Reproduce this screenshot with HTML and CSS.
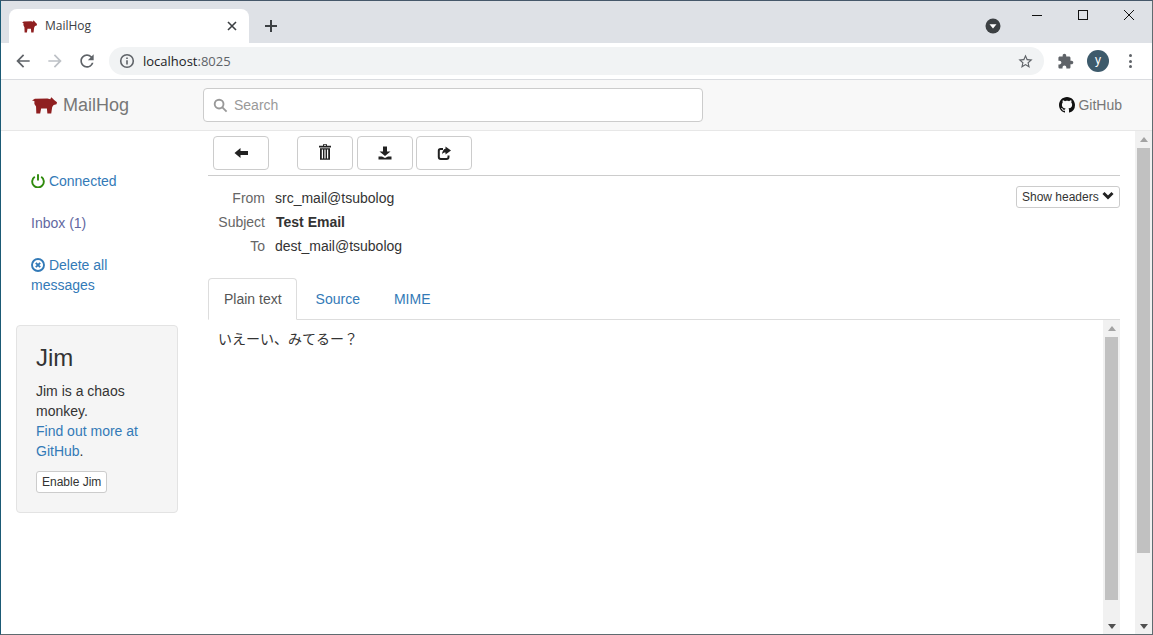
FILE: index.html
```html
<!DOCTYPE html>
<html lang="en">
<head>
    <meta charset="UTF-8">
    <title>MailHog</title>
    <link rel="stylesheet" href="styles.css">
</head>
<body>
    <svg class="defs" width="0" height="0">
        <symbol id="pig" viewBox="0 0 26 17" preserveAspectRatio="none">
            <path d="M0 3.5 L3 1.8 L16 1.5 L19 2.2 L20 0.3 L21.5 1.5 L23 3 L26 5.3 L25.5 7.2 L22.5 8 L21 10 L20 16.5 L16 16.5 L15.5 11.5 L9.5 11.5 L8.5 16.5 L4.5 16.5 L4.2 9.5 L2.5 7 L2.5 4 Z"/>
        </symbol>
    </svg>

    <!-- browser chrome -->
    <div class="tabstrip">
        <div class="tab">
            <svg class="tab-icon"><use href="#pig"/></svg>
            <span class="tab-title">MailHog</span>
            <svg class="tab-close" viewBox="0 0 10 10"><path d="M1 1 L9 9 M9 1 L1 9"/></svg>
        </div>
        <svg class="new-tab" viewBox="0 0 12 12"><path d="M6 0 V12 M0 6 H12"/></svg>
        <svg class="profile-drop" viewBox="0 0 16 16"><circle cx="8" cy="8" r="7.5" fill="#3c4043"/><path d="M4.5 6.2 H11.5 L8 10.5 Z" fill="#fff"/></svg>
        <div class="window-buttons">
            <svg viewBox="0 0 12 12"><path d="M1 6.5 H11"/></svg>
            <svg viewBox="0 0 12 12"><rect x="1.5" y="1.5" width="9" height="9"/></svg>
            <svg viewBox="0 0 12 12"><path d="M1 1 L11 11 M11 1 L1 11"/></svg>
        </div>
    </div>
    <div class="toolbar">
        <svg class="tool-icon" viewBox="0 0 24 24"><path d="M20 11H7.83l5.59-5.59L12 4l-8 8 8 8 1.41-1.41L7.83 13H20v-2z"/></svg>
        <svg class="tool-icon disabled" viewBox="0 0 24 24"><path d="M4 11h12.17l-5.59-5.59L12 4l8 8-8 8-1.41-1.41L16.17 13H4v-2z"/></svg>
        <svg class="tool-icon" viewBox="0 0 24 24"><path d="M17.65 6.35A7.958 7.958 0 0 0 12 4c-4.42 0-7.99 3.58-7.99 8s3.57 8 7.99 8c3.73 0 6.84-2.55 7.73-6h-2.08A5.99 5.99 0 0 1 12 18c-3.31 0-6-2.69-6-6s2.69-6 6-6c1.66 0 3.14.69 4.22 1.78L13 11h7V4l-2.35 2.35z"/></svg>
        <div class="omnibox">
            <svg class="info-icon" viewBox="0 0 16 16"><circle cx="8" cy="8" r="6.3"/><path d="M8 7.2 V11.5 M8 4.5 V6"/></svg>
            <span class="url">localhost<span class="port">:8025</span></span>
            <svg class="star-icon" viewBox="0 0 24 24"><path d="M22 9.24l-7.19-.62L12 2 9.19 8.63 2 9.24l5.46 4.73L5.82 21 12 17.27 18.18 21l-1.63-7.03L22 9.24zM12 15.4l-3.76 2.27 1-4.28-3.32-2.88 4.38-.38L12 6.1l1.71 4.04 4.38.38-3.32 2.88 1 4.28L12 15.4z"/></svg>
        </div>
        <svg class="puzzle-icon" viewBox="0 0 24 24"><path d="M20.5 11H19V7c0-1.1-.9-2-2-2h-4V3.5C13 2.12 11.88 1 10.5 1S8 2.12 8 3.5V5H4c-1.1 0-1.99.9-1.99 2v3.8H3.5c1.49 0 2.7 1.21 2.7 2.7s-1.21 2.7-2.7 2.7H2V20c0 1.1.9 2 2 2h3.8v-1.5c0-1.49 1.21-2.7 2.7-2.7 1.49 0 2.7 1.21 2.7 2.7V22H17c1.1 0 2-.9 2-2v-4h1.5c1.38 0 2.5-1.12 2.5-2.5S21.88 11 20.5 11z"/></svg>
        <div class="avatar">y</div>
        <div class="menu-dots"><i></i><i></i><i></i></div>
    </div>

    <!-- mailhog page -->
    <div class="navbar">
        <a class="brand">
            <svg class="brand-icon"><use href="#pig"/></svg>
            <span>MailHog</span>
        </a>
        <div class="search">
            <svg class="search-icon" viewBox="0 0 16 16"><circle cx="6.5" cy="6.5" r="4.7"/><path d="M10 10 L14.5 14.5"/></svg>
            <span>Search</span>
        </div>
        <a class="github">
            <svg viewBox="0 0 16 16"><path d="M8 0C3.58 0 0 3.58 0 8c0 3.54 2.29 6.53 5.47 7.59.4.07.55-.17.55-.38 0-.19-.01-.82-.01-1.49-2.01.37-2.53-.49-2.69-.94-.09-.23-.48-.94-.82-1.13-.28-.15-.68-.52-.01-.53.63-.01 1.08.58 1.23.82.72 1.21 1.87.87 2.33.66.07-.52.28-.87.51-1.07-1.78-.2-3.64-.89-3.64-3.95 0-.87.31-1.59.82-2.15-.08-.2-.36-1.02.08-2.12 0 0 .67-.21 2.2.82.64-.18 1.32-.27 2-.27.68 0 1.36.09 2 .27 1.53-1.04 2.2-.82 2.2-.82.44 1.1.16 1.92.08 2.12.51.56.82 1.27.82 2.15 0 3.07-1.87 3.75-3.65 3.95.29.25.54.73.54 1.48 0 1.07-.01 1.93-.01 2.2 0 .21.15.46.55.38A8.013 8.013 0 0 0 16 8c0-4.42-3.58-8-8-8z"/></svg>
            <span>GitHub</span>
        </a>
    </div>

    <div class="main">
        <div class="sidebar">
            <ul class="side-nav">
                <li><a><svg class="glyph power" viewBox="0 0 14 14"><path d="M3.8 2.8 A5.8 5.8 0 1 0 10.2 2.8 M7 0.3 V6.5"/></svg> Connected</a></li>
                <li><a class="visited">Inbox (1)</a></li>
                <li><a><svg class="glyph remove" viewBox="0 0 14 14"><circle cx="7" cy="7" r="6"/><path d="M4.8 4.8 L9.2 9.2 M9.2 4.8 L4.8 9.2"/></svg> Delete all messages</a></li>
            </ul>
            <div class="well">
                <h3>Jim</h3>
                <p>Jim is a chaos monkey.<br><a>Find out more at GitHub</a>.</p>
                <button class="btn-xs">Enable Jim</button>
            </div>
        </div>

        <div class="content">
            <div class="actions">
                <button class="btn back">
                    <svg viewBox="0 0 14 14"><path d="M0.5 7 L6.5 2 V5 H14 V9 H6.5 V12 Z"/></svg>
                </button>
                <button class="btn">
                    <svg class="trash" viewBox="0 0 14 16"><path d="M5 0.3 H9 V1.8 H13 V3.4 H1 V1.8 H5 Z M6 1 V1.8 H8 V1 Z M2 4.2 H12 V15.8 H2 Z M3.8 5.6 V14.4 H5 V5.6 Z M6.4 5.6 V14.4 H7.6 V5.6 Z M9 5.6 V14.4 H10.2 V5.6 Z" fill-rule="evenodd"/></svg>
                </button>
                <button class="btn">
                    <svg viewBox="0 0 14 14"><path d="M5 0.5 H9 V5.5 H12.5 L7 10 L1.5 5.5 H5 Z M0.5 10.5 H4 L7 12 L10 10.5 H13.5 V13.5 H0.5 Z"/></svg>
                </button>
                <button class="btn share">
                    <svg viewBox="0 0 14 14"><path d="M8.5 0.5 L14 4.5 L8.5 8.5 V6.5 C7 6.5 5.5 7 5 8.5 C5 5.5 6.5 3 8.5 2.7 Z"/><path class="share-box" d="M6 3 H3.5 Q1.8 3 1.8 4.7 V11 Q1.8 13 3.8 13 H9.5 Q11.5 13 11.5 11 V9.5"/></svg>
                </button>
            </div>

            <div class="headers">
                <button class="btn-xs show-headers">Show headers <svg viewBox="0 0 12 10"><path d="M1.5 2 L6 6.5 L10.5 2"/></svg></button>
                <div class="header-row"><span class="label">From</span><span class="value">src_mail@tsubolog</span></div>
                <div class="header-row"><span class="label">Subject</span><span class="value subject">Test Email</span></div>
                <div class="header-row"><span class="label">To</span><span class="value">dest_mail@tsubolog</span></div>
            </div>

            <ul class="nav-tabs">
                <li class="active"><a>Plain text</a></li>
                <li><a>Source</a></li>
                <li><a>MIME</a></li>
            </ul>

            <div class="message">
                <div class="message-body">いえーい、みてるー？</div>
                <div class="scrollbar message-scroll">
                    <div class="arrow-up"></div>
                    <div class="thumb"></div>
                    <div class="arrow-down"></div>
                </div>
            </div>
        </div>

        <div class="scrollbar page-scroll">
            <div class="arrow-up"></div>
            <div class="thumb"></div>
            <div class="arrow-down"></div>
        </div>
    </div>
</body>
</html>
```

FILE: styles.css
```css
* {
    box-sizing: border-box;
}

html, body {
    height: 100%;
}

body {
    margin: 0;
    overflow: hidden;
    display: flex;
    flex-direction: column;
    font-family: "Liberation Sans", Arial, sans-serif;
    font-size: 14px;
    line-height: 20px;
    color: #333;
    background-color: #fff;
    border: 1px solid #5f6b70;
    border-left-color: #1b5a75;
    border-top-color: #46586a;
}

.defs {
    position: absolute;
}

a {
    color: #337ab7;
}

/* browser chrome */
.tabstrip {
    height: 42px;
    flex: none;
    display: flex;
    align-items: flex-end;
    padding-left: 8px;
    background-color: #dee1e6;
}

.tab {
    width: 240px;
    height: 34px;
    display: flex;
    align-items: center;
    padding: 0 12px 0 13px;
    background-color: #fff;
    border-radius: 8px 8px 0 0;
}

.tab-icon {
    width: 15px;
    height: 13px;
    fill: #8f1f20;
}

.tab-title {
    flex: 1;
    margin-left: 8px;
    font-family: "Open Sans", sans-serif;
    font-size: 12px;
    color: #3c4043;
}

.tab-close {
    width: 10px;
    height: 10px;
    stroke: #3c4043;
    stroke-width: 1.6;
    fill: none;
}

.new-tab {
    width: 12px;
    height: 12px;
    margin: 0 0 11px 16px;
    stroke: #3c4043;
    stroke-width: 2;
    fill: none;
}

.profile-drop {
    width: 16px;
    height: 16px;
    margin: 0 0 9px 708px;
}

.window-buttons {
    align-self: flex-start;
    display: flex;
    gap: 34px;
    margin: 8px 0 0 30px;
}

.window-buttons svg {
    width: 12px;
    height: 12px;
    stroke: #111;
    stroke-width: 1;
    fill: none;
}

.toolbar {
    height: 37px;
    flex: none;
    display: flex;
    align-items: center;
    padding-left: 12px;
    background-color: #fff;
    border-bottom: 1px solid #dadce0;
}

.tool-icon {
    width: 20px;
    height: 20px;
    margin-right: 12px;
    fill: #5f6368;
}

.tool-icon.disabled {
    fill: #bdc1c6;
}

.omnibox {
    width: 935px;
    height: 28px;
    display: flex;
    align-items: center;
    padding: 0 10px;
    background-color: #f1f3f4;
    border-radius: 14px;
}

.info-icon {
    width: 16px;
    height: 16px;
    stroke: #5f6368;
    stroke-width: 1.6;
    fill: none;
}

.url {
    flex: 1;
    margin-left: 8px;
    font-family: "Open Sans", sans-serif;
    font-size: 13px;
    color: #202124;
}

.port {
    color: #5f6368;
}

.star-icon {
    width: 17px;
    height: 17px;
    fill: #5f6368;
}

.puzzle-icon {
    width: 17px;
    height: 17px;
    margin-left: 13px;
    fill: #5f6368;
}

.avatar {
    width: 22px;
    height: 22px;
    margin-left: 13px;
    border-radius: 50%;
    text-align: center;
    font-size: 12px;
    line-height: 20px;
    color: #fff;
    background-color: #3d5a6b;
}

.menu-dots {
    display: flex;
    flex-direction: column;
    gap: 2.5px;
    margin-left: 20px;
}

.menu-dots i {
    width: 3px;
    height: 3px;
    border-radius: 50%;
    background-color: #5f6368;
}

/* mailhog page */
.navbar {
    height: 51px;
    flex: none;
    display: flex;
    align-items: center;
    background-color: #f8f8f8;
    border-bottom: 1px solid #e7e7e7;
}

.brand {
    width: 202px;
    display: flex;
    align-items: center;
    padding-left: 31px;
    font-size: 18px;
    color: #777;
}

.brand-icon {
    width: 25px;
    height: 17px;
    margin-right: 6px;
    fill: #8f1f20;
}

.search {
    width: 500px;
    height: 34px;
    display: flex;
    align-items: center;
    gap: 6px;
    padding-left: 9px;
    color: #999;
    background-color: #fff;
    border: 1px solid #ccc;
    border-radius: 4px;
}

.search-icon {
    width: 15px;
    height: 15px;
    stroke: #999;
    stroke-width: 2;
    fill: none;
}

.github {
    display: flex;
    align-items: center;
    gap: 3px;
    margin-left: auto;
    margin-right: 30px;
    color: #777;
}

.github svg {
    width: 16px;
    height: 16px;
    fill: #111;
}

.main {
    flex: 1;
    min-height: 0;
    display: flex;
}

.sidebar {
    width: 207px;
    flex: none;
    padding: 30px 15px 0;
}

.side-nav {
    list-style: none;
    margin: 0 30px 20px 0;
    padding: 0;
}

.side-nav li {
    padding: 10px 0 10px 15px;
    margin-bottom: 2px;
}

.visited {
    color: #62679f;
}

.glyph {
    width: 14px;
    height: 14px;
    vertical-align: -2px;
    fill: none;
    stroke-width: 1.9;
}

.power {
    stroke: #2f8a0c;
}

.remove {
    stroke: #337ab7;
}

.well {
    width: 162px;
    padding: 19px;
    background-color: #f5f5f5;
    border: 1px solid #e3e3e3;
    border-radius: 4px;
}

.well h3 {
    margin: 0 0 10px;
    font-size: 24px;
    font-weight: 500;
    line-height: 26.4px;
}

.well p {
    margin: 0 0 10px;
}

.btn-xs {
    height: 22px;
    padding: 0 5px;
    font-family: inherit;
    font-size: 12px;
    color: #333;
    background-color: #fff;
    border: 1px solid #ccc;
    border-radius: 3px;
}

.content {
    flex: 1;
    min-width: 0;
    display: flex;
    flex-direction: column;
    margin-right: 15px;
}

.actions {
    display: flex;
    gap: 4px;
    height: 45px;
    padding: 5px 0 0 5px;
    border-bottom: 1px solid #ccc;
}

.btn {
    width: 56px;
    height: 34px;
    display: flex;
    align-items: center;
    justify-content: center;
    background-color: #fff;
    border: 1px solid #ccc;
    border-radius: 4px;
}

.btn svg {
    width: 14px;
    height: 14px;
    fill: #222;
}

.btn .trash {
    height: 16px;
    margin-bottom: 3px;
}

.btn .share-box {
    fill: none;
    stroke: #222;
    stroke-width: 2;
}

.btn.back {
    margin-right: 24px;
}

.btn.share {
    margin-left: -1px;
}

.headers {
    position: relative;
    flex: none;
    margin: 10px 0 20px;
}

.show-headers {
    position: absolute;
    top: 0;
    right: 0;
    width: 104px;
    white-space: nowrap;
}

.show-headers svg {
    width: 12px;
    height: 10px;
    stroke: #222;
    stroke-width: 3;
    fill: none;
}

.header-row {
    display: flex;
    line-height: 24px;
}

.label {
    width: 57px;
    text-align: right;
    color: #666;
}

.value {
    margin-left: 10px;
}

.subject {
    margin-left: 11px;
    font-weight: bold;
}

.nav-tabs {
    flex: none;
    display: flex;
    list-style: none;
    margin: 0;
    padding: 0;
    height: 42px;
    border-bottom: 1px solid #ddd;
}

.nav-tabs li {
    margin-right: 2px;
    height: 42px;
}

.nav-tabs a {
    display: block;
    padding: 10px 15px;
    border: 1px solid transparent;
    border-radius: 4px 4px 0 0;
}

.nav-tabs .active {
    margin-right: 3px;
}

.nav-tabs .active a {
    padding-right: 14px;
    color: #555;
    background-color: #fff;
    border-color: #ddd #ddd #fff;
}

.message {
    flex: 1;
    min-height: 0;
    display: flex;
}

.message-body {
    flex: 1;
    padding: 9px 10px;
    font-family: "Liberation Sans", "Noto Sans CJK JP", sans-serif;
}

.scrollbar {
    width: 17px;
    flex: none;
    display: flex;
    flex-direction: column;
    align-items: center;
    background-color: #f1f1f1;
}

.thumb {
    width: 13px;
    margin-top: 6px;
    background-color: #c1c1c1;
}

.message-scroll .thumb {
    height: 263px;
}

.page-scroll .thumb {
    height: 405px;
}

.arrow-up {
    width: 0;
    height: 0;
    margin-top: 6px;
    border: 4px solid transparent;
    border-top: 0;
    border-bottom: 5px solid #a3a3a3;
}

.arrow-down {
    width: 0;
    height: 0;
    margin-top: auto;
    margin-bottom: 5px;
    border: 4px solid transparent;
    border-bottom: 0;
    border-top: 5px solid #505050;
}
```
